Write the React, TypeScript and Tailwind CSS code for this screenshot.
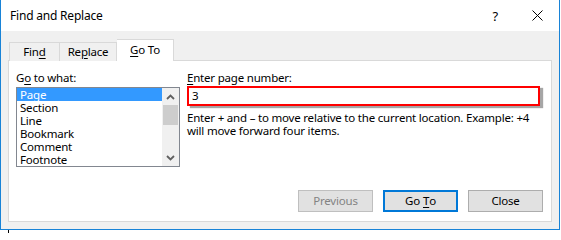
import React from "react";

const font = { fontFamily: '"Noto Sans", "Segoe UI", sans-serif' };

function Chevron({ up }: { up?: boolean }) {
  return (
    <svg width="9" height="6" viewBox="0 0 9 6" className="block">
      <path
        d={up ? "M1 5 L4.5 1.5 L8 5" : "M1 1 L4.5 4.5 L8 1"}
        fill="none"
        stroke="#606060"
        strokeWidth="1.8"
      />
    </svg>
  );
}

export default function App() {
  const items = ["Page", "Section", "Line", "Bookmark", "Comment", "Footnote"];
  return (
    <div className="w-[561px] h-[233px] bg-white text-[11.5px] tracking-[-0.2px] text-black" style={font}>
      <div className="w-[560px] h-[230px] flex flex-col border-l border-r border-b border-[#1883d7]">
        {/* Title bar */}
        <div className="h-[31px] bg-white flex items-center pl-[9px] pr-[16px]">
          <span className="text-[12px] leading-[16px]">Find and Replace</span>
          <span className="ml-auto text-[13px] leading-[16px] mr-[34px]">?</span>
          <svg width="11" height="11" viewBox="0 0 11 11" className="block">
            <path d="M0.5 0.5 L10.5 10.5 M10.5 0.5 L0.5 10.5" stroke="#000" strokeWidth="1" />
          </svg>
        </div>
        {/* Body */}
        <div className="flex-1 bg-[#f0f0f0] px-[7px] pt-[8px] pb-[7px] flex flex-col">
          {/* Tabs */}
          <div className="flex items-end h-[22px] pl-[1px] -mb-px relative z-10">
            <div className="w-[51px] h-[19px] border border-b-0 border-[#d9d9d9] bg-[#f0f0f0] flex items-center justify-center leading-[16px]">
              Fin<span className="underline underline-offset-2">d</span>
            </div>
            <div className="w-[57px] h-[19px] border border-l-0 border-b-0 border-[#d9d9d9] bg-[#f0f0f0] flex items-center justify-center leading-[16px]">
              Re<span className="underline underline-offset-2">p</span>lace
            </div>
            <div className="w-[57px] h-[22px] border border-l-0 border-b-0 border-[#d9d9d9] bg-white flex items-center justify-center leading-[16px] pb-[2px]">
              <span className="underline underline-offset-2">G</span>o To
            </div>
          </div>
          {/* Panel */}
          <div className="flex-1 bg-white border border-[#d9d9d9] flex flex-col pl-[7px] pr-[7px] pt-[10px] pb-[9px]">
            <div className="flex gap-[7px]">
              {/* Left column */}
              <div className="w-[164px] flex flex-col">
                <div className="h-[16px] leading-[14px]">
                  G<span className="underline underline-offset-2">o</span> to what:
                </div>
                <div className="h-[80px] border border-[#828790] flex">
                  <div className="flex-1 flex flex-col">
                    {items.map((it, i) => (
                      <div
                        key={it}
                        className={
                          "h-[13px] leading-[13px] pl-[3px] " +
                          (i === 0 ? "bg-[#3399ff] text-white" : "")
                        }
                      >
                        {it}
                      </div>
                    ))}
                  </div>
                  <div className="w-[17px] bg-[#f0f0f0] flex flex-col">
                    <div className="h-[17px] flex items-center justify-center">
                      <Chevron up />
                    </div>
                    <div className="h-[20px] mx-px bg-[#cdcdcd]" />
                    <div className="flex-1" />
                    <div className="h-[17px] flex items-center justify-center">
                      <Chevron />
                    </div>
                  </div>
                </div>
              </div>
              {/* Right column */}
              <div className="flex-1 flex flex-col">
                <div className="h-[15px] leading-[14px]">
                  <span className="underline underline-offset-2">E</span>nter page number:
                </div>
                <div className="h-[20px] w-[353px] border-[2px] border-[#ff0000] bg-white shadow-[3px_2px_1px_rgba(0,0,0,0.35)] flex items-center pl-[3px] leading-[14px]">
                  3
                </div>
                <div className="mt-[5px] leading-[13px] w-[356px]">
                  Enter + and – to move relative to the current location. Example: +4 will move forward four items.
                </div>
              </div>
            </div>
            {/* Buttons */}
            <div className="mt-auto flex justify-end gap-[10px] pr-[1px]">
              <div className="w-[75px] h-[22px] border border-[#bfbfbf] bg-[#e1e1e1] text-[#838383] flex items-center justify-center leading-[14px]">
                Previous
              </div>
              <div className="w-[75px] h-[22px] border-2 border-[#0078d7] bg-[#e1e1e1] flex items-center justify-center leading-[14px]">
                Go <span className="underline underline-offset-2 ml-[3px]">T</span>o
              </div>
              <div className="w-[75px] h-[22px] border border-[#adadad] bg-[#e1e1e1] flex items-center justify-center leading-[14px]">
                Close
              </div>
            </div>
          </div>
        </div>
      </div>
      <div className="ml-[8px] w-px h-[3px] bg-black" />
    </div>
  );
}
